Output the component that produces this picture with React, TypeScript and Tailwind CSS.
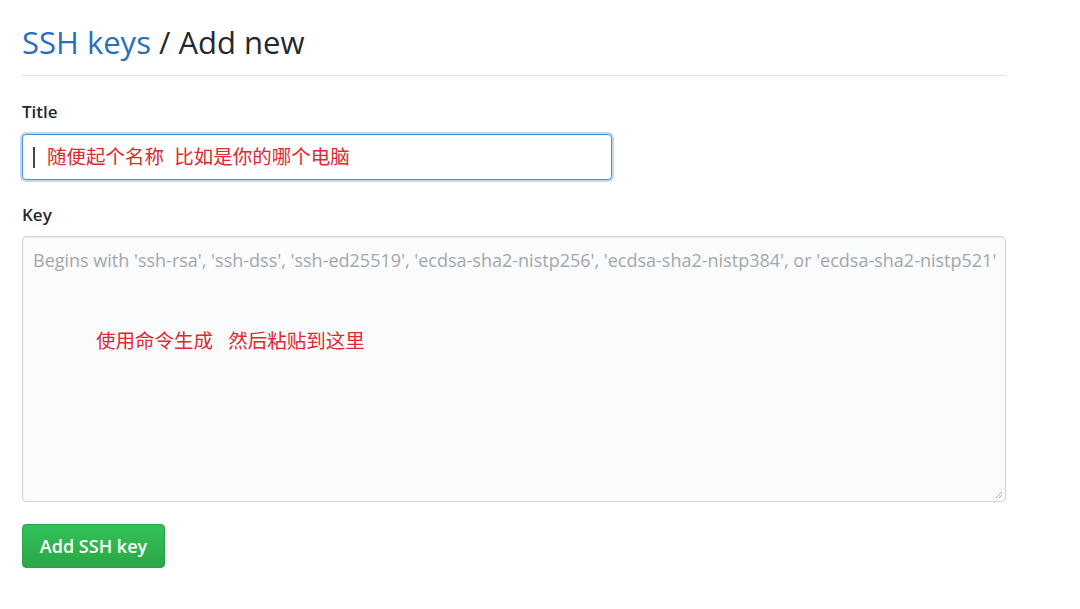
import React from "react";

const sans = "font-['Segoe_UI','Open_Sans','Noto_Sans_CJK_SC',sans-serif]";

export default function App() {
  return (
    <div className={`min-h-[609px] w-[1080px] bg-white ${sans} text-[#24292e]`}>
      <div className="w-[984px] pl-[22px] pt-[22px]">
        <div className="w-[984px] border-b border-[#e1e4e8] pb-[13px]">
          <h1 className="text-[31px] font-normal leading-[40px]">
            <span className="text-[#2a6fbe]">SSH keys</span> / Add new
          </h1>
        </div>

        <div className="mt-[24px]">
          <label className="block text-[17px] font-semibold leading-[24px]">Title</label>
          <div className="mt-[10px] flex h-[46px] w-[590px] items-center rounded-[4px] border border-[#4a90e2] bg-white pl-[10px] shadow-[0_0_0_2px_rgba(3,102,214,0.25)]">
            <span className="mr-[12px] h-[21px] w-[2px] bg-[#444]" />
            <span className="text-[19.5px] text-[#e0282e]">随便起个名称&nbsp;&nbsp;比如是你的哪个电脑</span>
          </div>
        </div>

        <div className="mt-[23px]">
          <label className="block text-[17px] font-semibold leading-[24px]">Key</label>
          <div className="relative mt-[9px] h-[266px] w-[984px] rounded-[4px] border border-[#d1d5da] bg-[#fafbfc] shadow-[inset_0_1px_2px_rgba(27,31,35,0.075)]">
            <div className="pl-[10px] pt-[10px] text-[18px] leading-[26px] text-[#a3a7ab]">
              Begins with 'ssh-rsa', 'ssh-dss', 'ssh-ed25519', 'ecdsa-sha2-nistp256', 'ecdsa-sha2-nistp384', or 'ecdsa-sha2-nistp521'
            </div>
            <div className="pl-[73px] pt-[55px] text-[19.5px] leading-[26px] text-[#e0282e]">
              使用命令生成&nbsp;&nbsp;&nbsp;然后粘贴到这里
            </div>
            <svg className="absolute bottom-[2px] right-[2px]" width="8" height="8" viewBox="0 0 8 8">
              <path d="M7 1L1 7M7 4L4 7" stroke="#aaa" strokeWidth="1" />
            </svg>
          </div>
        </div>

        <button className="mt-[22px] h-[44px] w-[143px] rounded-[4px] border border-[#2a9f45] bg-gradient-to-b from-[#34c25a] to-[#28a745] text-[18px] font-semibold text-white">
          Add SSH key
        </button>
      </div>
    </div>
  );
}
